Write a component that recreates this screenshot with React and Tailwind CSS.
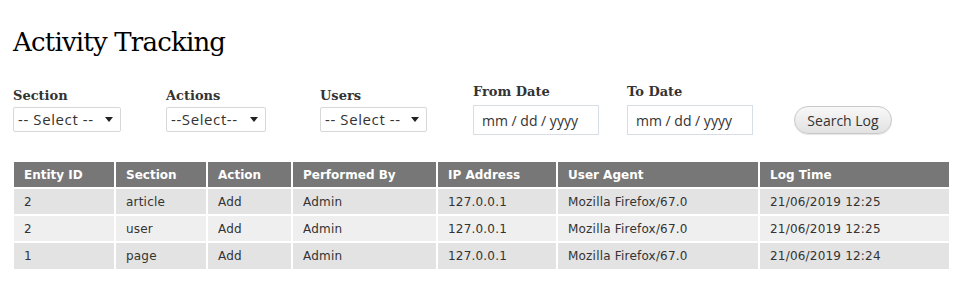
const rows = [
  { id: "2", section: "article", action: "Add", by: "Admin", ip: "127.0.0.1", agent: "Mozilla Firefox/67.0", time: "21/06/2019 12:25" },
  { id: "2", section: "user", action: "Add", by: "Admin", ip: "127.0.0.1", agent: "Mozilla Firefox/67.0", time: "21/06/2019 12:25" },
  { id: "1", section: "page", action: "Add", by: "Admin", ip: "127.0.0.1", agent: "Mozilla Firefox/67.0", time: "21/06/2019 12:24" },
];

const cols = [
  { label: "Entity ID", w: "w-[101px]" },
  { label: "Section", w: "w-[92px]" },
  { label: "Action", w: "w-[85px]" },
  { label: "Performed By", w: "w-[145px]" },
  { label: "IP Address", w: "w-[120px]" },
  { label: "User Agent", w: "w-[202px]" },
  { label: "Log Time", w: "w-[190px]" },
];

function Caret() {
  return (
    <svg width="8" height="5" viewBox="0 0 8 5" className="shrink-0">
      <path d="M0 0 L8 0 L4 5 Z" fill="#222" />
    </svg>
  );
}

function FakeSelect({ label, text, w }) {
  return (
    <div className={`flex flex-col mt-[4px] ${w}`}>
      <label className="font-['DejaVu_Serif',serif] text-[13px] font-bold text-[#333] leading-[18px] mb-[2px]">
        {label}
      </label>
      <div className="h-[25px] border border-[#d8d8d8] rounded-[2px] bg-white flex items-center justify-between pl-[4px] pr-[7px] font-['Open_Sans',sans-serif] text-[15px] tracking-[0.6px] text-[#333] whitespace-pre">
        <span>{text}</span>
        <Caret />
      </div>
    </div>
  );
}

function FakeDate({ label }) {
  return (
    <div className="flex flex-col w-[126px]">
      <label className="font-['DejaVu_Serif',serif] text-[13px] font-bold text-[#333] leading-[18px] mb-[4px]">
        {label}
      </label>
      <div className="h-[30px] border border-[#d8dce4] bg-white flex items-center pl-[8px] font-['Open_Sans',sans-serif] text-[14px] text-[#333]">
        mm / dd / yyyy
      </div>
    </div>
  );
}

export default function App() {
  return (
    <div className="bg-white w-[966px] h-[292px] pl-[13px] pt-[24px]">
      <h1 className="font-['DejaVu_Serif',serif] text-[26px] text-black leading-[36px] tracking-[-0.8px]">
        Activity Tracking
      </h1>

      {/* Filters */}
      <div className="flex items-start mt-[23px]">
        <FakeSelect label="Section" text="-- Select -- " w="w-[108px]" />
        <div className="w-[45px]" />
        <FakeSelect label="Actions" text="--Select--" w="w-[100px]" />
        <div className="w-[54px]" />
        <FakeSelect label="Users" text="-- Select -- " w="w-[107px]" />
        <div className="w-[46px]" />
        <FakeDate label="From Date" />
        <div className="w-[28px]" />
        <FakeDate label="To Date" />
        <div className="w-[41px]" />
        <button className="h-[28px] w-[98px] mt-[23px] rounded-[14px] border border-[#c8c8c8] bg-gradient-to-b from-[#f8f8f8] to-[#e2e2e2] font-['Open_Sans',sans-serif] text-[14px] text-[#333] shadow-[0_1px_1px_rgba(0,0,0,0.1)]">
          Search Log
        </button>
      </div>

      {/* Table */}
      <table className="mt-[27px] ml-[1px] border-collapse font-['DejaVu_Sans',sans-serif] text-[12px] tracking-[0.2px] text-[#333]">
        <thead>
          <tr className="bg-[#777777] h-[26px]">
            {cols.map((c, i) => (
              <th
                key={c.label}
                className={`${c.w} text-left font-bold text-white px-[10px] tracking-[0px] ${i > 0 ? "border-l-2 border-white" : ""}`}
              >
                {c.label}
              </th>
            ))}
          </tr>
        </thead>
        <tbody>
          {rows.map((r, ri) => (
            <tr
              key={ri}
              className={`h-[27px] border-t-2 border-white ${ri === 1 ? "bg-[#efefef]" : "bg-[#e3e3e3]"}`}
            >
              {[r.id, r.section, r.action, r.by, r.ip, r.agent, r.time].map((v, i) => (
                <td key={i} className={`px-[10px] ${i > 0 ? "border-l-2 border-white" : ""}`}>
                  {v}
                </td>
              ))}
            </tr>
          ))}
        </tbody>
      </table>
    </div>
  );
}
